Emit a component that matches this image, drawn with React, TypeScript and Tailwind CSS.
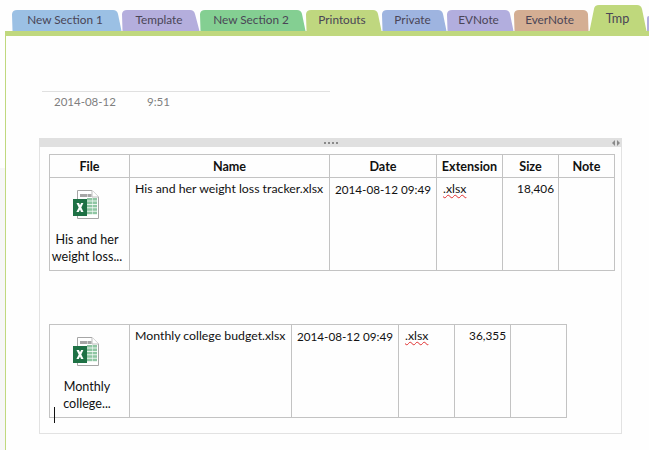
const font = { fontFamily: "Lato, 'Open Sans', sans-serif" };

type Tab = { label: string; w: number; ml: number; color: string; top: number; inL: number; inR: number; active?: boolean };

const tabs: Tab[] = [
  { label: "New Section 1", w: 110, ml: 12, color: "#9bc0e4", top: 10, inL: 0, inR: 4 },
  { label: "Template", w: 78, ml: 0, color: "#b4aedd", top: 10, inL: 0, inR: 5 },
  { label: "New Section 2", w: 106, ml: 0, color: "#84cf92", top: 10, inL: 0, inR: 4 },
  { label: "Printouts", w: 76, ml: 0, color: "#bfd77f", top: 10, inL: 0, inR: 4 },
  { label: "Private", w: 65, ml: 0, color: "#9eb4e0", top: 10, inL: 0, inR: 4 },
  { label: "EVNote", w: 67, ml: 0, color: "#b2aede", top: 10, inL: 0, inR: 4 },
  { label: "EverNote", w: 75, ml: 0, color: "#d4ae93", top: 10, inL: 0, inR: 1 },
  { label: "Tmp", w: 58, ml: 0, color: "#bfd87c", top: 5, inL: 5, inR: 5, active: true },
];

function TabShape({ t }: { t: Tab }) {
  const h = 31 - t.top;
  const d = `M0.5 ${h} L${t.inL} 4 Q${t.inL + 0.5} 0 ${t.inL + 5} 0 L${t.w - t.inR - 5} 0 Q${t.w - t.inR - 1} 0 ${t.w - t.inR} 4 L${t.w - 0.5} ${h} Z`;
  return (
    <svg className="absolute left-0 top-0" width={t.w} height={h} viewBox={`0 0 ${t.w} ${h}`}>
      <path d={d} fill={t.color} />
    </svg>
  );
}

function ExcelIcon() {
  return (
    <svg width="28" height="30" viewBox="0 0 28 30" className="mr-[2px] block">
      <path d="M5.5 .5H20L26.5 7V28.5H5.5Z" fill="#fff" stroke="#a6a6a6" />
      <path d="M20 .5V7H26.5" fill="#fff" stroke="#bdbdbd" />
      <rect x="8" y="4" width="7" height="3" fill="#a6a6a6" />
      <rect x="15.5" y="4" width="4" height="3" fill="#a6a6a6" />
      <g fill="#8fc6a3">
        <rect x="15" y="8" width="5" height="2.6" />
        <rect x="20.5" y="8" width="4.5" height="2.6" />
        <rect x="15" y="11.4" width="5" height="2.6" />
        <rect x="20.5" y="11.4" width="4.5" height="2.6" />
        <rect x="15" y="14.8" width="5" height="2.6" />
        <rect x="20.5" y="14.8" width="4.5" height="2.6" />
        <rect x="15" y="18.2" width="5" height="2.6" />
        <rect x="20.5" y="18.2" width="4.5" height="2.6" />
        <rect x="15" y="21.6" width="5" height="2.6" />
        <rect x="20.5" y="21.6" width="4.5" height="2.6" />
      </g>
      <rect x="1" y="9" width="14" height="17" fill="#1e7145" />
      <path d="M4.5 13H7L8 15.2L9.1 13H11.4L9.3 17.4L11.5 22H9L8 19.6L6.8 22H4.4L6.7 17.4Z" fill="#fff" />
    </svg>
  );
}

function Squiggle({ children }: { children: string }) {
  return <span className="underline decoration-wavy decoration-[#e03030] decoration-1 underline-offset-1">{children}</span>;
}

function FileCell({ lines }: { lines: string[] }) {
  return (
    <td className="border border-[#c3c3c3] p-0 align-top">
      <div className="flex flex-col items-center pr-[5px] pt-[12px] text-[12.6px] leading-[17px] text-[#111]">
        <ExcelIcon />
        <div className="mt-[11px] text-center">
          {lines.map((l) => (
            <div key={l} className="whitespace-nowrap">{l}</div>
          ))}
        </div>
      </div>
    </td>
  );
}

const base = "border border-[#c3c3c3] pt-[2px] align-top whitespace-nowrap leading-[18px] text-[#111]";
const cell = `${base} px-[5px] text-[12.3px]`;
const dateCell = `${base} px-[5px] text-[11.7px]`;
const extCell = `${base} pl-[6px] pr-[4px] text-[12.3px]`;
const sizeCell = `${base} pl-[4px] pr-[4px] text-right text-[11.8px]`;
const head = "border border-[#c3c3c3] p-0 pt-[1px] text-center font-bold text-[12.6px] leading-[21px] text-[#111] whitespace-nowrap";

export default function App() {
  return (
    <div className="flex h-[450px] w-[649px] flex-col overflow-hidden bg-[#fefefe]" style={font}>
      <div className="flex h-[31px] shrink-0 items-end">
        {tabs.map((t) => (
          <div
            key={t.label}
            className="relative flex shrink-0 items-center justify-center"
            style={{ width: t.w, height: 31 - t.top, marginLeft: t.ml }}
          >
            <TabShape t={t} />
            <span className={`relative whitespace-nowrap text-[#4a4556] ${t.active ? "pr-[1px] pt-[2px] text-[12.6px]" : "pb-[1px] pr-[4px] text-[11.8px]"}`}>
              {t.label}
            </span>
          </div>
        ))}
        <div className="h-[15px] w-[3px] shrink-0 rounded-tl-[2px] bg-[#b2aede]" />
      </div>

      <div className="flex min-h-0 flex-1">
        <div className="flex w-[5px] shrink-0 flex-col">
          <div className="h-[137px] shrink-0" />
          <div className="flex-1 bg-[#f6f6f6]" />
        </div>

        <div className="relative flex-1 border-l border-t-[5px] border-[#c0d87e] pl-[33px] pt-[55px]">
          <div className="ml-[3px] w-[288px] border-t border-[#e0e0e0] pl-[12px] pt-[1px] text-[11.5px] leading-[18px] text-[#7f7f7f]">
            <span className="inline-block w-[93px]">2014-08-12</span>
            <span>9:51</span>
          </div>

          <div className="mt-[27px] h-[296px] w-[583px] border-x border-b border-[#e2e2e2]">
            <div className="relative -mx-px flex h-[9px] items-center justify-center bg-[#e0e0e0]">
              <div className="flex gap-[2px]">
                <i className="block h-[2px] w-[2px] bg-[#8a8a8a]" />
                <i className="block h-[2px] w-[2px] bg-[#8a8a8a]" />
                <i className="block h-[2px] w-[2px] bg-[#8a8a8a]" />
                <i className="block h-[2px] w-[2px] bg-[#8a8a8a]" />
              </div>
              <div className="absolute right-[2px] top-[2px] flex gap-[2px]">
                <i className="block h-0 w-0 border-y-[3px] border-r-[3px] border-y-transparent border-r-[#8a8a8a]" />
                <i className="block h-0 w-0 border-y-[3px] border-l-[3px] border-y-transparent border-l-[#8a8a8a]" />
              </div>
            </div>

            <div className="pl-[9px] pt-[7px]">
              <table className="table-fixed border-collapse" style={{ width: 566 }}>
                <colgroup>
                  <col className="w-[80px]" />
                  <col className="w-[200px]" />
                  <col className="w-[107px]" />
                  <col className="w-[66px]" />
                  <col className="w-[56px]" />
                  <col className="w-[56px]" />
                </colgroup>
                <tbody>
                  <tr className="h-[23px]">
                    <td className={head}>File</td>
                    <td className={head}>Name</td>
                    <td className={head}>Date</td>
                    <td className={head}>Extension</td>
                    <td className={head}>Size</td>
                    <td className={head}>Note</td>
                  </tr>
                  <tr className="h-[93px]">
                    <FileCell lines={["His and her", "weight loss..."]} />
                    <td className={cell}>His and her weight loss tracker.xlsx</td>
                    <td className={dateCell}>2014-08-12 09:49</td>
                    <td className={extCell}><Squiggle>.xlsx</Squiggle></td>
                    <td className={sizeCell}>18,406</td>
                    <td className={cell}></td>
                  </tr>
                </tbody>
              </table>

              <table className="mt-[53px] table-fixed border-collapse" style={{ width: 517 }}>
                <colgroup>
                  <col className="w-[80px]" />
                  <col className="w-[162px]" />
                  <col className="w-[107px]" />
                  <col className="w-[56px]" />
                  <col className="w-[56px]" />
                  <col className="w-[56px]" />
                </colgroup>
                <tbody>
                  <tr className="h-[93px]">
                    <FileCell lines={["Monthly", "college..."]} />
                    <td className={cell}>Monthly college budget.xlsx</td>
                    <td className={dateCell}>2014-08-12 09:49</td>
                    <td className={extCell}><Squiggle>.xlsx</Squiggle></td>
                    <td className={sizeCell}>36,355</td>
                    <td className={cell}></td>
                  </tr>
                </tbody>
              </table>
            </div>
          </div>

          <div className="absolute left-[48px] top-[371px] h-[16px] w-px bg-[#111]" />
        </div>
      </div>
    </div>
  );
}
